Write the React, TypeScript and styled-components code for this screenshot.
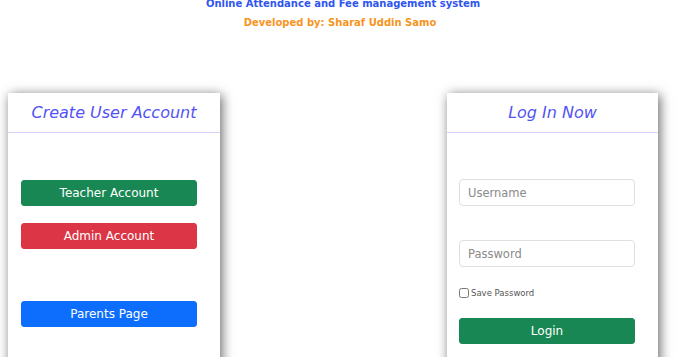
import React from 'react';
import styled, { createGlobalStyle } from 'styled-components';

const GlobalStyle = createGlobalStyle`
  html, body {
    margin: 0;
    padding: 0;
    background: #ffffff;
    font-family: "DejaVu Sans", "Liberation Sans", sans-serif;
    overflow: hidden;
  }
`;

const Page = styled.div`
  width: 680px;
  height: 357px;
  overflow: hidden;
`;

const Banner = styled.header`
  text-align: center;
  margin-top: -3px;
  height: 96px;
`;

const SystemName = styled.div`
  color: #2f55f0;
  font-weight: bold;
  font-size: 10px;
  line-height: 14px;
  padding-left: 6px;
`;

const Developer = styled.div`
  color: #f7941d;
  font-weight: bold;
  font-size: 10px;
  line-height: 14px;
  margin-top: 5px;
`;

const Columns = styled.main`
  display: grid;
  grid-template-columns: 212px 1fr 211px;
  padding: 0 22px 0 8px;
`;

const Card = styled.section<{ $col: number }>`
  grid-column: ${({ $col }) => $col};
  background: #fff;
  height: 300px;
  box-shadow: 2px 2px 11px rgba(0, 0, 0, 0.6);
`;

const CardHeader = styled.h2`
  margin: 0;
  height: 39px;
  border-bottom: 1px solid #d4d4ff;
  display: flex;
  align-items: center;
  justify-content: center;
  color: #5353f5;
  font-style: italic;
  font-weight: normal;
  font-size: 16px;
`;

const CardBody = styled.div<{ $inset: number }>`
  padding: 0 12px 0 ${({ $inset }) => $inset}px;
  display: flex;
  flex-direction: column;
`;

const Button = styled.button<{ $color: string; $top: number }>`
  margin-top: ${({ $top }) => $top}px;
  height: 26px;
  width: 176px;
  border: 1px solid ${({ $color }) => $color};
  border-radius: 3px;
  background: ${({ $color }) => $color};
  color: #fff;
  font-family: inherit;
  font-size: 12px;
  padding: 0;
  cursor: pointer;
`;

const Field = styled.input<{ $top: number }>`
  margin-top: ${({ $top }) => $top}px;
  height: 27px;
  width: 176px;
  box-sizing: border-box;
  border: 1px solid #dcdfe3;
  border-radius: 4px;
  padding: 0 8px;
  font-family: inherit;
  font-size: 11.5px;
  color: #333;
  &::placeholder {
    color: #8a8a8a;
  }
`;

const CheckRow = styled.label`
  margin-top: 21px;
  display: flex;
  align-items: center;
  gap: 2px;
  font-size: 8.5px;
  color: #555;
  height: 10px;
`;

const Check = styled.input`
  margin: 0;
  width: 10px;
  height: 10px;
`;

export default function App() {
  return (
    <Page>
      <GlobalStyle />
      <Banner>
        <SystemName>Online Attendance and Fee management system</SystemName>
        <Developer>Developed by: Sharaf Uddin Samo</Developer>
      </Banner>
      <Columns>
        <Card $col={1}>
          <CardHeader>Create User Account</CardHeader>
          <CardBody $inset={13}>
            <Button $color="#198754" $top={47}>Teacher Account</Button>
            <Button $color="#dc3545" $top={17}>Admin Account</Button>
            <Button $color="#0d6efd" $top={52}>Parents Page</Button>
          </CardBody>
        </Card>
        <Card $col={3}>
          <CardHeader>Log In Now</CardHeader>
          <CardBody $inset={12}>
            <Field $top={46} placeholder="Username" />
            <Field $top={34} type="password" placeholder="Password" />
            <CheckRow>
              <Check type="checkbox" />
              Save Password
            </CheckRow>
            <Button $color="#198754" $top={20}>Login</Button>
          </CardBody>
        </Card>
      </Columns>
    </Page>
  );
}
